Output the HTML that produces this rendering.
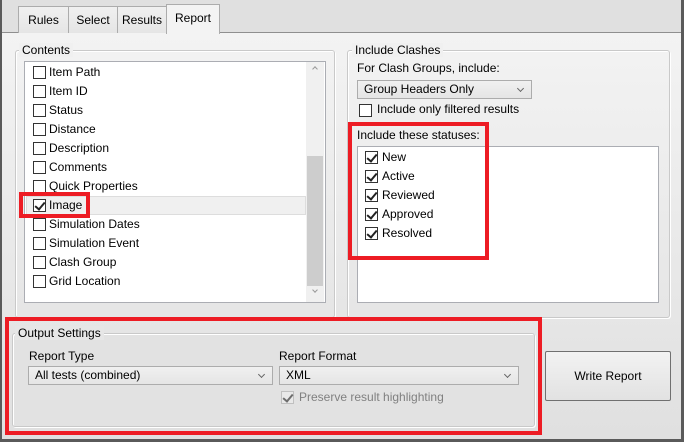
<!DOCTYPE html>
<html><head><style>
*{margin:0;padding:0;box-sizing:border-box}
body{width:684px;height:442px;overflow:hidden;font-family:"Liberation Sans",sans-serif;font-size:12px;color:#000;background:#e0e0e0;position:relative}
.abs{position:absolute}
.win{left:0;top:0;width:684px;height:442px;border-left:2px solid #5a5a5a;border-right:3px solid #5a5a5a;border-bottom:3px solid #5a5a5a}
.content{left:2px;top:32px;width:679px;height:407px;background:linear-gradient(#f3f3f3,#e0e0e0);border-top:1px solid #8f8f8f}
.tab{top:6px;height:27px;border:1px solid #acacac;border-bottom:none;background:linear-gradient(#f0f0f0,#e5e5e5);text-align:center;line-height:26px}
.tab.sel{top:4px;height:30px;background:#f3f3f3;line-height:26px;border-color:#acacac;z-index:2}
.grp{border:1px solid #c9c9c9;border-radius:3px;box-shadow:inset 1px 1px 0 #fff,1px 1px 0 #fff}
.gt{background:#f0f0f0;padding:0 3px;line-height:14px}
.list{background:#fff;border:1px solid #abadb3}
.cb{width:13px;height:13px;border:1px solid #333;background:#fff}
.row{position:absolute;left:8px;height:19px;line-height:19px}
.row .cb{position:absolute;left:0;top:3px}
.row span{position:absolute;left:16px;white-space:nowrap}
.dd{border:1px solid #acacac;background:linear-gradient(#f0f0f0,#e5e5e5);line-height:17px;padding-left:6px}
.dd:after{content:"";position:absolute;right:8px;top:5px;width:4px;height:4px;border-right:1px solid #666;border-bottom:1px solid #666;transform:rotate(45deg)}
.red{border:4px solid #ed1c24}
.chk:after{content:"";position:absolute;left:3px;top:0px;width:4px;height:8px;border-right:2px solid #222;border-bottom:2px solid #222;transform:rotate(40deg)}
</style></head><body>
<div class="abs win"></div>
<div class="abs content"></div>
<div class="abs tab" style="left:18px;width:51px">Rules</div>
<div class="abs tab" style="left:68px;width:50px">Select</div>
<div class="abs tab" style="left:117px;width:50px">Results</div>
<div class="abs tab sel" style="left:166px;width:54px">Report</div>

<div class="abs grp" style="left:15px;top:50px;width:320px;height:268px"></div>
<div class="abs gt" style="left:19px;top:43px">Contents</div>
<div class="abs list" style="left:24px;top:61px;width:302px;height:242px;overflow:hidden">
  <div class="abs" style="left:281px;top:0;width:18px;height:240px;background:#f0f0f0"></div>
  <div class="abs" style="left:283px;top:5px;width:4px;height:4px;border-left:1px solid #999;border-top:1px solid #999;transform:rotate(45deg);margin-left:5px"></div>
  <div class="abs" style="left:282px;top:94px;width:16px;height:130px;background:#cdcdcd"></div>
  <div class="abs" style="left:288px;top:226px;width:4px;height:4px;border-right:1px solid #999;border-bottom:1px solid #999;transform:rotate(45deg)"></div>
  <div class="abs" style="left:1px;top:134px;width:280px;height:19px;background:#f0f0f0;border:1px solid #ddd"></div>
  <div class="row" style="top:1px"><div class="cb"></div><span>Item Path</span></div>
  <div class="row" style="top:20px"><div class="cb"></div><span>Item ID</span></div>
  <div class="row" style="top:39px"><div class="cb"></div><span>Status</span></div>
  <div class="row" style="top:58px"><div class="cb"></div><span>Distance</span></div>
  <div class="row" style="top:77px"><div class="cb"></div><span>Description</span></div>
  <div class="row" style="top:96px"><div class="cb"></div><span>Comments</span></div>
  <div class="row" style="top:115px"><div class="cb"></div><span>Quick Properties</span></div>
  <div class="row" style="top:134px"><div class="cb chk" style="position:absolute"></div><span>Image</span></div>
  <div class="row" style="top:153px"><div class="cb"></div><span>Simulation Dates</span></div>
  <div class="row" style="top:172px"><div class="cb"></div><span>Simulation Event</span></div>
  <div class="row" style="top:191px"><div class="cb"></div><span>Clash Group</span></div>
  <div class="row" style="top:210px"><div class="cb"></div><span>Grid Location</span></div>
</div>
<div class="abs red" style="left:19px;top:192px;width:71px;height:26px"></div>

<div class="abs grp" style="left:347px;top:50px;width:323px;height:268px"></div>
<div class="abs gt" style="left:352px;top:43px">Include Clashes</div>
<div class="abs" style="left:357px;top:61px">For Clash Groups, include:</div>
<div class="abs dd" style="left:357px;top:80px;width:175px;height:19px">Group Headers Only</div>
<div class="abs cb" style="left:359px;top:104px"></div>
<div class="abs" style="left:377px;top:102px">Include only filtered results</div>
<div class="abs" style="left:357px;top:128px">Include these statuses:</div>
<div class="abs list" style="left:357px;top:146px;width:302px;height:157px">
  <div class="row" style="top:1px;left:7px"><div class="cb chk" style="position:absolute"></div><span style="left:17px">New</span></div>
  <div class="row" style="top:20px;left:7px"><div class="cb chk" style="position:absolute"></div><span style="left:17px">Active</span></div>
  <div class="row" style="top:39px;left:7px"><div class="cb chk" style="position:absolute"></div><span style="left:17px">Reviewed</span></div>
  <div class="row" style="top:58px;left:7px"><div class="cb chk" style="position:absolute"></div><span style="left:17px">Approved</span></div>
  <div class="row" style="top:77px;left:7px"><div class="cb chk" style="position:absolute"></div><span style="left:17px">Resolved</span></div>
</div>
<div class="abs red" style="left:348px;top:122px;width:141px;height:138px"></div>

<div class="abs grp" style="left:12px;top:333px;width:523px;height:94px;background:#e2e2e2"></div>
<div class="abs gt" style="left:15px;top:326px;background:#e6e6e6">Output Settings</div>
<div class="abs" style="left:29px;top:349px">Report Type</div>
<div class="abs dd" style="left:28px;top:366px;width:245px;height:19px">All tests (combined)</div>
<div class="abs" style="left:279px;top:349px">Report Format</div>
<div class="abs dd" style="left:279px;top:366px;width:240px;height:19px">XML</div>
<div class="abs cb chk" style="left:281px;top:391px;border-color:#aaa;background:#eee;opacity:.6"></div>
<div class="abs" style="left:299px;top:390px;color:#808080">Preserve result highlighting</div>
<div class="abs red" style="left:5px;top:317px;width:537px;height:118px"></div>
<div class="abs" style="left:545px;top:351px;width:126px;height:50px;border:1px solid #707070;border-radius:2px;background:linear-gradient(#f2f2f2,#e2e2e2);text-align:center;line-height:48px">Write Report</div>
</body></html>
